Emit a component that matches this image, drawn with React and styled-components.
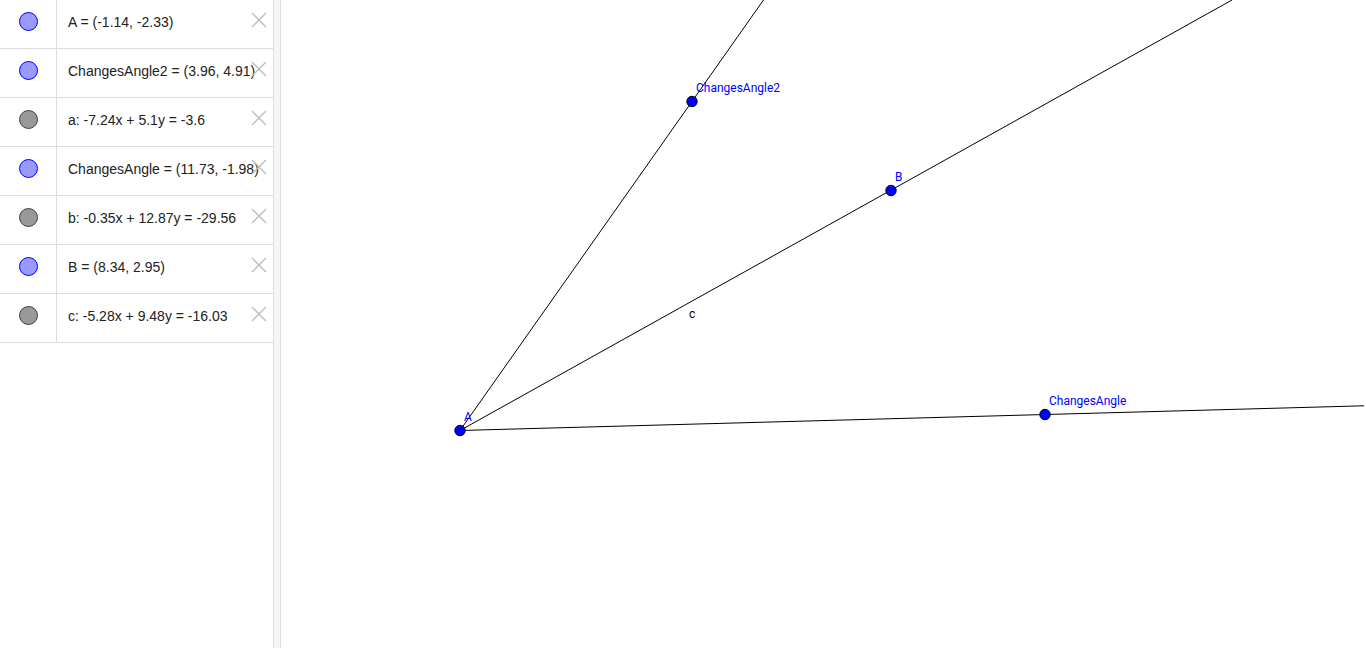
import styled, { createGlobalStyle } from 'styled-components';

const GlobalStyle = createGlobalStyle`
    html, body {
        margin: 0;
        padding: 0;
        background: #fff;
    }
    #root {
        height: 648px;
    }
`;

const items = [
    { kind: 'point', text: 'A = (-1.14, -2.33)' },
    { kind: 'point', text: 'ChangesAngle2 = (3.96, 4.91)' },
    { kind: 'line', text: 'a: -7.24x + 5.1y = -3.6' },
    { kind: 'point', text: 'ChangesAngle = (11.73, -1.98)' },
    { kind: 'line', text: 'b: -0.35x + 12.87y = -29.56' },
    { kind: 'point', text: 'B = (8.34, 2.95)' },
    { kind: 'line', text: 'c: -5.28x + 9.48y = -16.03' },
];

// canvas is offset 281px from the page's left edge
const points = [
    { name: 'A', x: 179, y: 430.5, lx: 183, ly: 421 },
    { name: 'ChangesAngle2', x: 411, y: 101.5, lx: 415, ly: 92 },
    { name: 'B', x: 610, y: 190.5, lx: 614, ly: 181 },
    { name: 'ChangesAngle', x: 764, y: 414.5, lx: 768, ly: 405 },
];

const rays = [
    [179, 430.5, 482.5, 0],
    [179, 430.5, 951, 0],
    [179, 430.5, 1083, 405.8],
];

const CloseIcon = () => (
    <svg width="16" height="16" viewBox="0 0 16 16">
        <path d="M1 1 L15 15 M15 1 L1 15" stroke="#bdbdbd" strokeWidth="1.4" fill="none" />
    </svg>
);

const App = () => {
    return (
        <Page>
            <GlobalStyle />
            <AlgebraPanel>
                {items.map((item) => (
                    <Row key={item.text}>
                        <MarkerCell>
                            <Marker $kind={item.kind} />
                        </MarkerCell>
                        <Formula>{item.text}</Formula>
                        <DeleteButton>
                            <CloseIcon />
                        </DeleteButton>
                    </Row>
                ))}
            </AlgebraPanel>
            <Splitter />
            <Canvas>
                <svg width="1085" height="648" viewBox="0 0 1085 648">
                    {rays.map(([x1, y1, x2, y2], i) => (
                        <line key={i} x1={x1} y1={y1} x2={x2} y2={y2} stroke="#000" strokeWidth="1" />
                    ))}
                    {points.map((p) => (
                        <g key={p.name}>
                            <circle cx={p.x} cy={p.y} r="5.2" fill="#0000ff" stroke="#000" strokeWidth="1" />
                            <PointLabel x={p.lx} y={p.ly}>{p.name}</PointLabel>
                        </g>
                    ))}
                    <LineLabel x="408" y="318">c</LineLabel>
                </svg>
            </Canvas>
        </Page>
    );
};

const Page = styled.div`
    display: flex;
    width: 1366px;
    height: 648px;
    overflow: hidden;
    background: #fff;
`;

const AlgebraPanel = styled.div`
    width: 273px;
    flex-shrink: 0;
    display: flex;
    flex-direction: column;
    background: #fff;
`;

const Row = styled.div`
    position: relative;
    display: flex;
    height: 49px;
    box-sizing: border-box;
    border-bottom: 1px solid #dcdcdc;
`;

const MarkerCell = styled.div`
    width: 57px;
    box-sizing: border-box;
    border-right: 1px solid #dcdcdc;
    display: flex;
    justify-content: center;
    padding-top: 12px;
`;

const Marker = styled.div`
    width: 19px;
    height: 19px;
    box-sizing: border-box;
    border-radius: 50%;
    background: ${(p) => (p.$kind === 'point' ? '#9999ff' : '#999999')};
    border: 1px solid ${(p) => (p.$kind === 'point' ? '#0000ff' : '#404040')};
`;

const Formula = styled.div`
    padding: 13px 0 0 11px;
    font-family: 'Liberation Sans', Arial, sans-serif;
    font-size: 14px;
    line-height: 18px;
    color: #222;
    white-space: nowrap;
`;

const DeleteButton = styled.div`
    position: absolute;
    top: 12px;
    right: 6px;
    width: 16px;
    height: 16px;
    display: flex;
    background: transparent;
`;

const Splitter = styled.div`
    width: 8px;
    flex-shrink: 0;
    box-sizing: border-box;
    background: #f5f5f5;
    border-left: 1px solid #dcdcdc;
    border-right: 1px solid #dcdcdc;
`;

const Canvas = styled.div`
    flex: 1;
    position: relative;
    background: #fff;
`;

const PointLabel = styled.text`
    font-family: Roboto, 'Noto Sans', sans-serif;
    font-size: 12px;
    fill: #0000ff;
`;

const LineLabel = styled.text`
    font-family: Roboto, 'Noto Sans', sans-serif;
    font-size: 12px;
    fill: #000;
`;

export default App;
